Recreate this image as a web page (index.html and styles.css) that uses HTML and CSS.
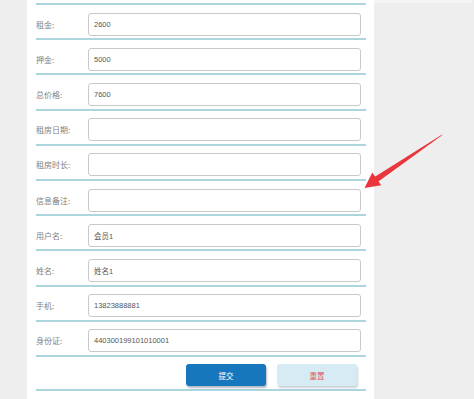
FILE: index.html
```html
<!DOCTYPE html>
<html lang="zh">
<head>
<meta charset="utf-8">
<link rel="stylesheet" href="styles.css">
</head>
<body>
<div class="page">
  <div class="panel">
    <form class="form">
      <div class="row"><label class="label">租金:</label><input class="field" value="2600"></div>
      <div class="row"><label class="label">押金:</label><input class="field" value="5000"></div>
      <div class="row"><label class="label">总价格:</label><input class="field" value="7600"></div>
      <div class="row"><label class="label">租房日期:</label><input class="field" value=""></div>
      <div class="row"><label class="label">租房时长:</label><input class="field" value=""></div>
      <div class="row"><label class="label">信息备注:</label><input class="field" value=""></div>
      <div class="row"><label class="label">用户名:</label><input class="field" value="会员1"></div>
      <div class="row"><label class="label">姓名:</label><input class="field" value="姓名1"></div>
      <div class="row"><label class="label">手机:</label><input class="field" value="13823888881"></div>
      <div class="row"><label class="label">身份证:</label><input class="field" value="440300199101010001"></div>
      <div class="row actions">
        <button type="button" class="btn submit">提交</button>
        <button type="button" class="btn reset">重置</button>
      </div>
    </form>
  </div>
  <div class="side"></div>
</div>
<svg class="arrow" width="474" height="399" viewBox="0 0 474 399">
  <polygon points="442.6,134.3 441.4,135.7 377.0,182.6 373.7,177.6" fill="#e8363c"/>
  <polygon points="364.5,188 372.3,172.5 381.2,185.2" fill="#e8363c"/>
</svg>
</body>
</html>
```
FILE: styles.css
```css
html, body {
  margin: 0;
  padding: 0;
}
body {
  width: 474px;
  height: 399px;
  overflow: hidden;
  background: #eeeeee;
  font-family: "Noto Sans CJK SC", "Liberation Sans", sans-serif;
  position: relative;
}
.page {
  display: flex;
  height: 399px;
}
.panel {
  margin-left: 27px;
  width: 330px;
  background: #fff;
  padding: 3px 8px 0 9px;
}
.side {
  flex: 1;
  background: linear-gradient(#f4f4f4 0, #f4f4f4 3px, #eeeeee 3px);
  margin-right: 2px;
}
.form {
  border-top: 2px solid #acd5de;
}
.row {
  display: flex;
  align-items: center;
  height: 33.2px;
  border-bottom: 2px solid #acd5de;
  box-sizing: content-box;
}
.row .field {
  margin-top: 5px;
}
.label {
  width: 52px;
  font-size: 8px;
  color: #808080;
  margin-top: 5px;
}
.field {
  width: 273px;
  height: 23px;
  box-sizing: border-box;
  border: 1px solid #c9c9c9;
  border-radius: 3px;
  padding: 0 5px;
  font-family: "Liberation Sans", "Noto Sans CJK SC", sans-serif;
  font-size: 7.5px;
  color: #555;
  background: #fff;
  outline: none;
}
.actions {
  height: 32px;
  justify-content: flex-end;
  padding-right: 9px;
  gap: 11px;
}
.btn {
  width: 80px;
  height: 22px;
  margin-top: 5px;
  border: none;
  border-radius: 3px;
  font-family: "Noto Sans CJK SC", sans-serif;
  font-size: 7.5px;
  padding: 0;
}
.submit {
  background: #1677bd;
  color: #fff;
  box-shadow: 1px 2px 2px rgba(40, 60, 90, 0.35);
}
.reset {
  background: #d6ebf3;
  color: #e0595c;
  box-shadow: 1px 2px 2px rgba(90, 110, 130, 0.3);
}
.arrow {
  position: absolute;
  left: 0;
  top: 0;
  pointer-events: none;
}
```
